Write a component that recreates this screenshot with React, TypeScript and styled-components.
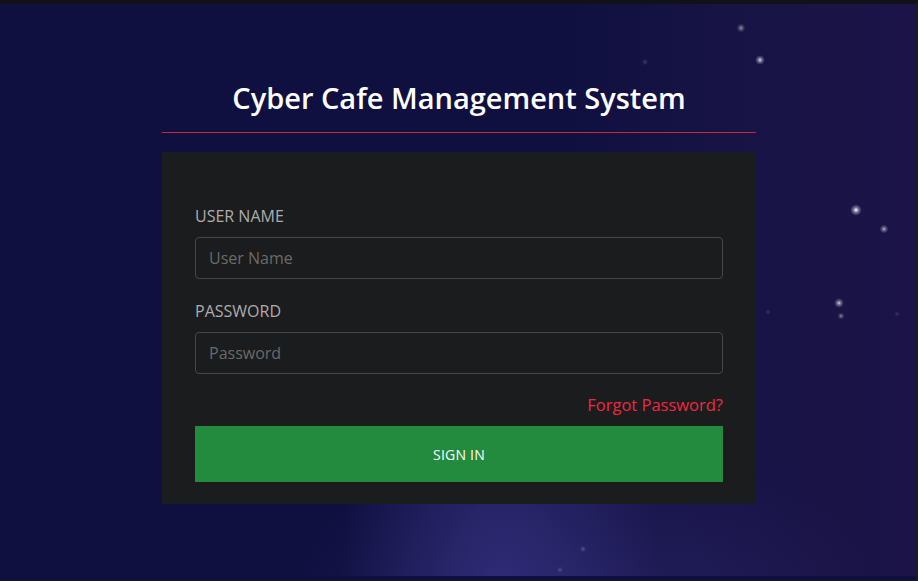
import React from "react";
import styled, { createGlobalStyle } from "styled-components";

const Global = createGlobalStyle`
  html, body { margin: 0; padding: 0; height: 100%; }
  body { font-family: "Open Sans", "Noto Sans", Arial, sans-serif; background: #121018; }
  * { box-sizing: border-box; }
`;

const stars = [
  [741, 28, 2, 0.55],
  [760, 60, 2.2, 0.85],
  [856, 210, 2.6, 1],
  [884, 229, 2, 0.7],
  [839, 303, 2.2, 0.8],
  [841, 316, 1.6, 0.5],
  [645, 62, 1.5, 0.2],
  [583, 549, 1.5, 0.25],
  [560, 570, 1.5, 0.2],
  [768, 312, 1.4, 0.15],
  [897, 314, 1.4, 0.15],
];

const starBg = stars
  .map(
    ([x, y, r, a]) =>
      `radial-gradient(circle at ${x}px ${y}px, rgba(255,255,255,${a}) 0, rgba(255,255,255,${(a as number) * 0.4}) ${r}px, rgba(255,255,255,0) ${(r as number) * 2.2}px)`
  )
  .join(", ");

const Page = styled.div`
  min-height: 581px;
  height: 100vh;
  border-top: 4px solid #121018;
  border-right: 2px solid #1b1b20;
  border-bottom: 1px solid #1b1b1e;
  padding-left: 2px;
  background-color: #0f1040;
  background-image: ${starBg},
    radial-gradient(ellipse 160px 320px at 500px 610px, rgba(58, 52, 135, 0.7), rgba(58, 52, 135, 0) 100%),
    radial-gradient(ellipse 300px 220px at 580px 630px, rgba(48, 42, 115, 0.6), rgba(48, 42, 115, 0) 100%),
    linear-gradient(90deg, #0f1040 0%, #0f1040 60%, #171345 80%, #1c1448 100%);
  background-position: 0 -4px;
  background-repeat: no-repeat;
  display: flex;
  justify-content: center;
  overflow: hidden;
`;

const Column = styled.div`
  width: 594px;
  display: flex;
  flex-direction: column;
  padding-top: 74px;
`;

const Title = styled.h1`
  margin: 0;
  text-align: center;
  color: #ffffff;
  font-family: "Open Sans", sans-serif;
  font-weight: 600;
  font-size: 29px;
  line-height: 40px;
  padding-bottom: 14px;
  border-bottom: 1px solid #c8283c;
`;

const Card = styled.form`
  margin-top: 19px;
  background: #1b1c1e;
  padding: 53px 33px 22px;
  display: flex;
  flex-direction: column;
`;

const Label = styled.label`
  color: #adadad;
  font-size: 16px;
  line-height: 22px;
  margin-bottom: 10px;
`;

const Input = styled.input<{ $mb?: number }>`
  height: 42px;
  width: 100%;
  background: transparent;
  border: 1px solid #45474a;
  border-radius: 4px;
  padding: 0 13px;
  font-family: "Open Sans", sans-serif;
  font-size: 16px;
  color: #ddd;
  margin-bottom: ${(p) => p.$mb ?? 0}px;
  outline: none;
  &::placeholder { color: #6a6a6a; }
`;

const ForgotRow = styled.div`
  display: flex;
  justify-content: flex-end;
  margin-top: 20px;
  margin-bottom: 10px;
`;

const Forgot = styled.a`
  color: #f0283e;
  font-size: 16.5px;
  line-height: 22px;
  text-decoration: none;
`;

const Button = styled.button`
  height: 56px;
  width: 100%;
  background: #228b3d;
  border: none;
  color: #ffffff;
  font-family: "Open Sans", sans-serif;
  font-size: 14px;
  letter-spacing: 0.2px;
  cursor: pointer;
`;

export default function App() {
  return (
    <>
      <Global />
      <Page>
        <Column>
          <Title>Cyber Cafe Management System</Title>
          <Card onSubmit={(e) => e.preventDefault()}>
            <Label htmlFor="u">USER NAME</Label>
            <Input id="u" placeholder="User Name" $mb={21} />
            <Label htmlFor="p">PASSWORD</Label>
            <Input id="p" type="password" placeholder="Password" />
            <ForgotRow>
              <Forgot href="#">Forgot Password?</Forgot>
            </ForgotRow>
            <Button type="submit">SIGN IN</Button>
          </Card>
        </Column>
      </Page>
    </>
  );
}
